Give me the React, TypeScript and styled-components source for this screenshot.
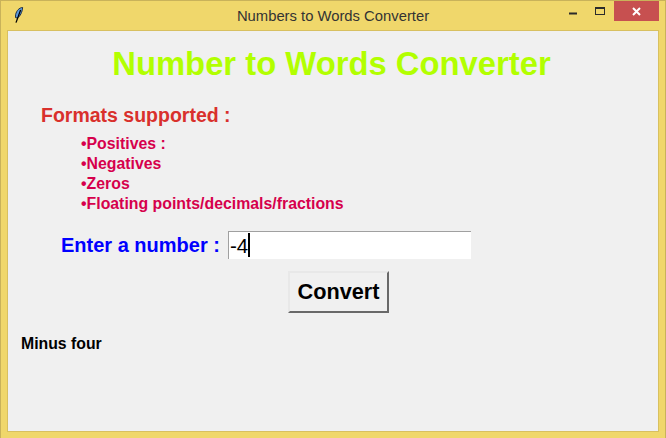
import { createGlobalStyle, styled } from 'styled-components';

const formats = ['Positives :', 'Negatives', 'Zeros', 'Floating points/decimals/fractions'];

const Global = createGlobalStyle`
  html, body {
    margin: 0;
    padding: 0;
    background: #f0d76b;
  }
`;

export default function App() {
  return (
    <>
      <Global />
      <Window_div>
        <TitleBar_div>
          <AppIcon_svg viewBox="0 0 10 17" aria-hidden="true">
            <path d="M8.6 0.4 C5 0.8 2.6 3.6 1.6 7.6 L1.5 10.6 L3.4 11 C6 9.6 8.4 5 8.6 0.4 Z" fill="#5b9be0" stroke="#12203a" strokeWidth="0.9" />
            <path d="M6.6 3 L2 15.6" stroke="#000" strokeWidth="1.3" fill="none" />
          </AppIcon_svg>
          <Title_span>Numbers to Words Converter</Title_span>
          <WinButton_div $pad={5}>
            <svg width="9" height="3" viewBox="0 0 9 3"><rect width="8" height="2" y="0.5" fill="#2b2b2b" /></svg>
          </WinButton_div>
          <WinButton_div $pad={0}>
            <svg width="11" height="9" viewBox="0 0 11 9">
              <rect x="0.5" y="0.5" width="9" height="7" fill="none" stroke="#2b2b2b" />
              <rect x="0" y="0" width="10" height="2" fill="#2b2b2b" />
            </svg>
          </WinButton_div>
          <CloseButton_div>
            <svg width="9" height="9" viewBox="0 0 9 9">
              <path d="M1 1 L8 8 M8 1 L1 8" stroke="#fff" strokeWidth="2" fill="none" />
            </svg>
          </CloseButton_div>
        </TitleBar_div>
        <Client_main>
          <Heading_h1>Number to Words Converter</Heading_h1>
          <Formats_h2>Formats supported :</Formats_h2>
          <FormatList_ul>
            {formats.map((format) => {
              return <FormatItem_li key={format}>•{format}</FormatItem_li>;
            })}
          </FormatList_ul>
          <InputRow_div>
            <InputLabel_label>Enter a number :</InputLabel_label>
            <NumberBox_div>
              -4
              <Caret_i />
            </NumberBox_div>
          </InputRow_div>
          <ButtonRow_div>
            <Convert_button>Convert</Convert_button>
          </ButtonRow_div>
          <Result_p>Minus four</Result_p>
        </Client_main>
      </Window_div>
    </>
  );
}
// --------------- Styled ---------------
const Window_div = styled.div`
  width: 666px;
  height: 438px;
  box-sizing: border-box;
  display: flex;
  flex-direction: column;
  padding: 0 6px 6px 6px;
  background: #f0d76b;
  border-top: 1px solid #c9b25a;
  border-left: 1px solid #c9b25a;
  border-right: 1px solid #c9b25a;
  font-family: 'Liberation Sans', Arial, sans-serif;
  overflow: hidden;
`;
const TitleBar_div = styled.div`
  height: 29px;
  flex: none;
  display: flex;
  align-items: flex-start;
  position: relative;
  margin-left: -6px;
  margin-right: -6px;
  padding-left: 13px;
  padding-right: 6px;
`;
const AppIcon_svg = styled.svg`
  width: 10px;
  height: 17px;
  margin-top: 6px;
  flex: none;
`;
const Title_span = styled.span`
  position: absolute;
  left: 0;
  right: 0;
  top: 6px;
  text-align: center;
  font-size: 14.8px;
  line-height: 18px;
  color: #333;
`;
const WinButton_div = styled.div<{ $pad: number }>`
  width: 27px;
  height: 20px;
  box-sizing: border-box;
  padding-top: ${(props) => props.$pad}px;
  flex: none;
  display: flex;
  align-items: center;
  justify-content: center;
  &:first-of-type {
    margin-left: auto;
  }
`;
const CloseButton_div = styled.div`
  width: 45px;
  height: 20px;
  flex: none;
  display: flex;
  align-items: center;
  justify-content: center;
  background: #c75050;
`;
const Client_main = styled.main`
  flex: 1;
  box-sizing: border-box;
  background: #f0f0f0;
  border: 1px solid #d8c060;
  padding-top: 13px;
`;
const Heading_h1 = styled.h1`
  margin: 0;
  padding-right: 3px;
  text-align: center;
  font-size: 32.8px;
  line-height: 39px;
  font-weight: bold;
  color: #b2ff00;
`;
const Formats_h2 = styled.h2`
  margin: 20px 0 0 33px;
  font-size: 19.5px;
  line-height: 24px;
  font-weight: bold;
  color: #d9302c;
`;
const FormatList_ul = styled.ul`
  list-style: none;
  margin: 7px 0 0 73px;
  padding: 0;
`;
const FormatItem_li = styled.li`
  font-size: 15.85px;
  line-height: 20px;
  font-weight: bold;
  color: #d6004c;
`;
const InputRow_div = styled.div`
  display: flex;
  align-items: center;
  margin: 17px 0 0 53px;
  height: 28px;
`;
const InputLabel_label = styled.label`
  font-size: 20px;
  line-height: 28px;
  font-weight: bold;
  color: #0000ff;
  width: 167px;
  flex: none;
`;
const NumberBox_div = styled.div`
  width: 243px;
  height: 28px;
  box-sizing: border-box;
  background: #fff;
  border-top: 1px solid #a0a0a0;
  border-left: 1px solid #a0a0a0;
  padding-left: 1px;
  font-size: 20.5px;
  line-height: 27px;
  color: #000;
  display: flex;
  align-items: flex-start;
`;
const Caret_i = styled.i`
  display: block;
  width: 2px;
  height: 24px;
  margin-top: 1px;
  background: #000;
`;
const ButtonRow_div = styled.div`
  display: flex;
  justify-content: center;
  margin-top: 12px;
  padding-left: 11px;
`;
const Convert_button = styled.button`
  width: 101px;
  height: 42px;
  box-sizing: border-box;
  padding: 0;
  background: #f0f0f0;
  border: 2px solid;
  border-color: #e8e8e8 #696969 #696969 #e8e8e8;
  font-family: inherit;
  font-size: 21.7px;
  font-weight: bold;
  color: #000;
`;
const Result_p = styled.p`
  margin: 21px 0 0 13px;
  font-size: 15.8px;
  line-height: 20px;
  font-weight: bold;
  color: #000;
`;
